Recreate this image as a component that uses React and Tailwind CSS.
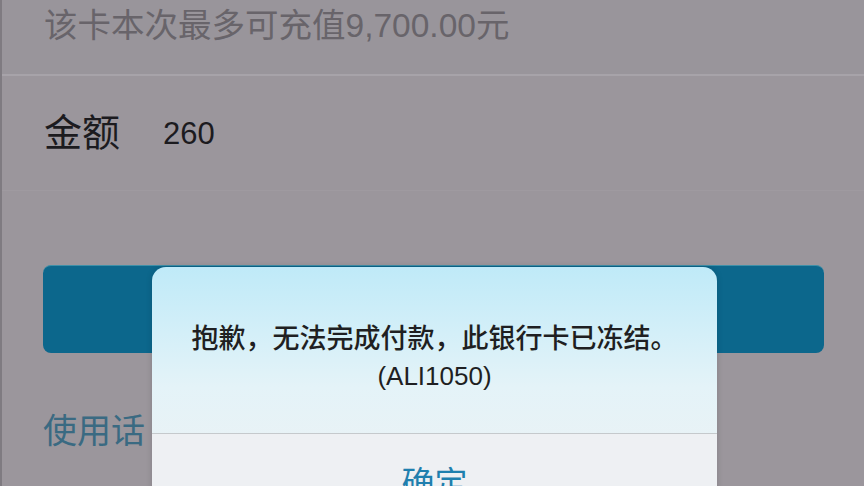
const font = { fontFamily: '"Liberation Sans", "Noto Sans CJK SC", sans-serif' };

const App = () => {
  return (
    <div
      className="relative w-[864px] h-[486px] overflow-hidden bg-[#9b969c] border-l-2 border-[#7f7b81]"
      style={font}
    >
      <div className="h-[74px] pt-[9px] pl-[42px] bg-[#99959b]">
        <p className="text-[33.5px] leading-[33px] text-[#68646a] whitespace-nowrap">该卡本次最多可充值9,700.00元</p>
      </div>
      <div className="h-[2px] bg-[#a7a3a9]"></div>

      <div className="h-[114px] flex items-center pl-[42px]">
        <span className="text-[38px] leading-none text-[#1c1b1f]">金额</span>
        <span className="ml-[43px] text-[31px] leading-none text-[#1c1b1f]">260</span>
      </div>
      <div className="h-px bg-[#9f9aa0]"></div>

      <div className="mt-[74px] ml-[41px] w-[781px] h-[88px] rounded-[8px] bg-[#0c678c] border-t border-[#3f90a8]"></div>

      <p className="mt-[61px] pl-[41px] text-[34px] leading-[34px] text-[#3a6a82] whitespace-nowrap">使用话</p>

      {/* alert */}
      <div className="absolute left-[150px] top-[267px] w-[565px] h-[240px] rounded-t-[14px] overflow-hidden bg-gradient-to-b from-[#bfeaf8] via-[#e4f3f8] to-[#eef1f3] shadow-[0_0_6px_rgba(0,0,0,0.15)]">
        <div className="pt-[54px] text-center text-[27px] leading-[37px] font-medium text-[#1f1f22]">
          <p>抱歉，无法完成付款，此银行卡已冻结。</p>
          <p className="text-[26px] font-normal">(ALI1050)</p>
        </div>
        <div className="mt-[38px] h-px bg-[#c5c9cc]"></div>
        <div className="h-[98px] flex items-center justify-center bg-[#eef0f3]">
          <span className="text-[33px] leading-none text-[#1f7fae]">确定</span>
        </div>
      </div>
    </div>
  );
};

export default App;
